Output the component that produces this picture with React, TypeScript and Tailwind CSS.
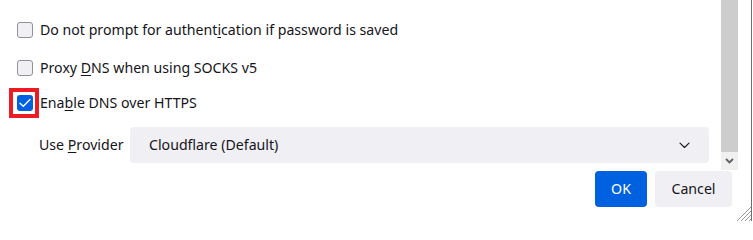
function Check({ checked }: { checked?: boolean }) {
  if (checked) {
    return (
      <span className="flex h-[16px] w-[16px] shrink-0 items-center justify-center rounded-[3px] bg-[#0061e0]">
        <svg width="12" height="10" viewBox="0 0 12 10" fill="none">
          <path d="M1 5.2 L4.3 8.3 L11 1.6" stroke="white" strokeWidth="1.4" strokeLinecap="round" strokeLinejoin="round" />
        </svg>
      </span>
    );
  }
  return <span className="block h-[16px] w-[16px] shrink-0 rounded-[3px] border border-[#8f8f9d] bg-[#f0f0f4]" />;
}

export default function App() {
  return (
    <div
      className="relative flex h-[221px] w-[753px] flex-col overflow-hidden bg-white text-[#15141a]"
      style={{ fontFamily: '"Noto Sans", sans-serif', fontSize: '14.15px' }}
    >
      <div className="flex h-[170px] shrink-0">
        <div className="flex flex-1 flex-col">
          <div className="mt-[22px] flex h-[16px] items-center gap-[7px] pl-[17px]">
            <Check />
            <span className="whitespace-nowrap leading-none">
              Do not prompt for authent<u className="underline-offset-2">i</u>cation if password is saved
            </span>
          </div>
          <div className="mt-[22px] flex h-[16px] items-center gap-[7px] pl-[17px]">
            <Check />
            <span className="whitespace-nowrap leading-none">
              Proxy <u className="underline-offset-2">D</u>NS when using SOCKS v5
            </span>
          </div>
          <div className="relative mt-[19px] flex h-[16px] items-center gap-[7px] pl-[17px]">
            <Check checked />
            <span className="whitespace-nowrap leading-none">
              Ena<u className="underline-offset-2">b</u>le DNS over HTTPS
            </span>
            <span className="absolute left-[9px] top-[-7px] h-[30px] w-[30px] border-[4px] border-[#ed1c24]" />
          </div>
          <div className="mt-[16px] flex items-center pl-[39px] pr-[12px]">
            <span className="w-[91px] whitespace-nowrap">
              Use <u className="underline-offset-2">P</u>rovider
            </span>
            <div className="flex h-[36px] flex-1 items-center justify-between rounded-[4px] bg-[#f0f0f4] pl-[19px] pr-[19px]">
              <span>Cloudflare (Default)</span>
              <svg width="11" height="7" viewBox="0 0 11 7" fill="none">
                <path d="M1 1.2 L5.5 5.5 L10 1.2" stroke="#15141a" strokeWidth="1.1" strokeLinecap="round" strokeLinejoin="round" />
              </svg>
            </div>
          </div>
        </div>
        <div className="flex w-[17px] shrink-0 flex-col">
          <div className="h-[152px] bg-[#cdcdcd]" />
          <div className="flex flex-1 items-center justify-center bg-[#f0f0f0]">
            <svg width="9" height="6" viewBox="0 0 9 6" fill="none">
              <path d="M1 1 L4.5 4.5 L8 1" stroke="#606060" strokeWidth="1.8" />
            </svg>
          </div>
        </div>
        <div className="w-[15px] shrink-0" />
      </div>
      <div className="flex justify-end gap-[8px] pr-[21px] pt-[1px]">
        <button className="flex h-[36px] w-[52px] items-center justify-center rounded-[4px] bg-[#0061e0] text-white">
          OK
        </button>
        <button className="flex h-[36px] w-[77px] items-center justify-center rounded-[4px] bg-[#f0f0f4] text-[#15141a]">
          Cancel
        </button>
      </div>
      <div className="absolute right-[1px] top-0 h-full w-px bg-[#6f6f6f]" />
      <svg className="absolute bottom-0 right-[2px]" width="16" height="14" viewBox="0 0 16 14">
        <path d="M2 14 L16 0 M6 14 L16 4 M10 14 L16 8 M14 14 L16 12" stroke="#9a9a9a" strokeWidth="1" />
      </svg>
    </div>
  );
}
